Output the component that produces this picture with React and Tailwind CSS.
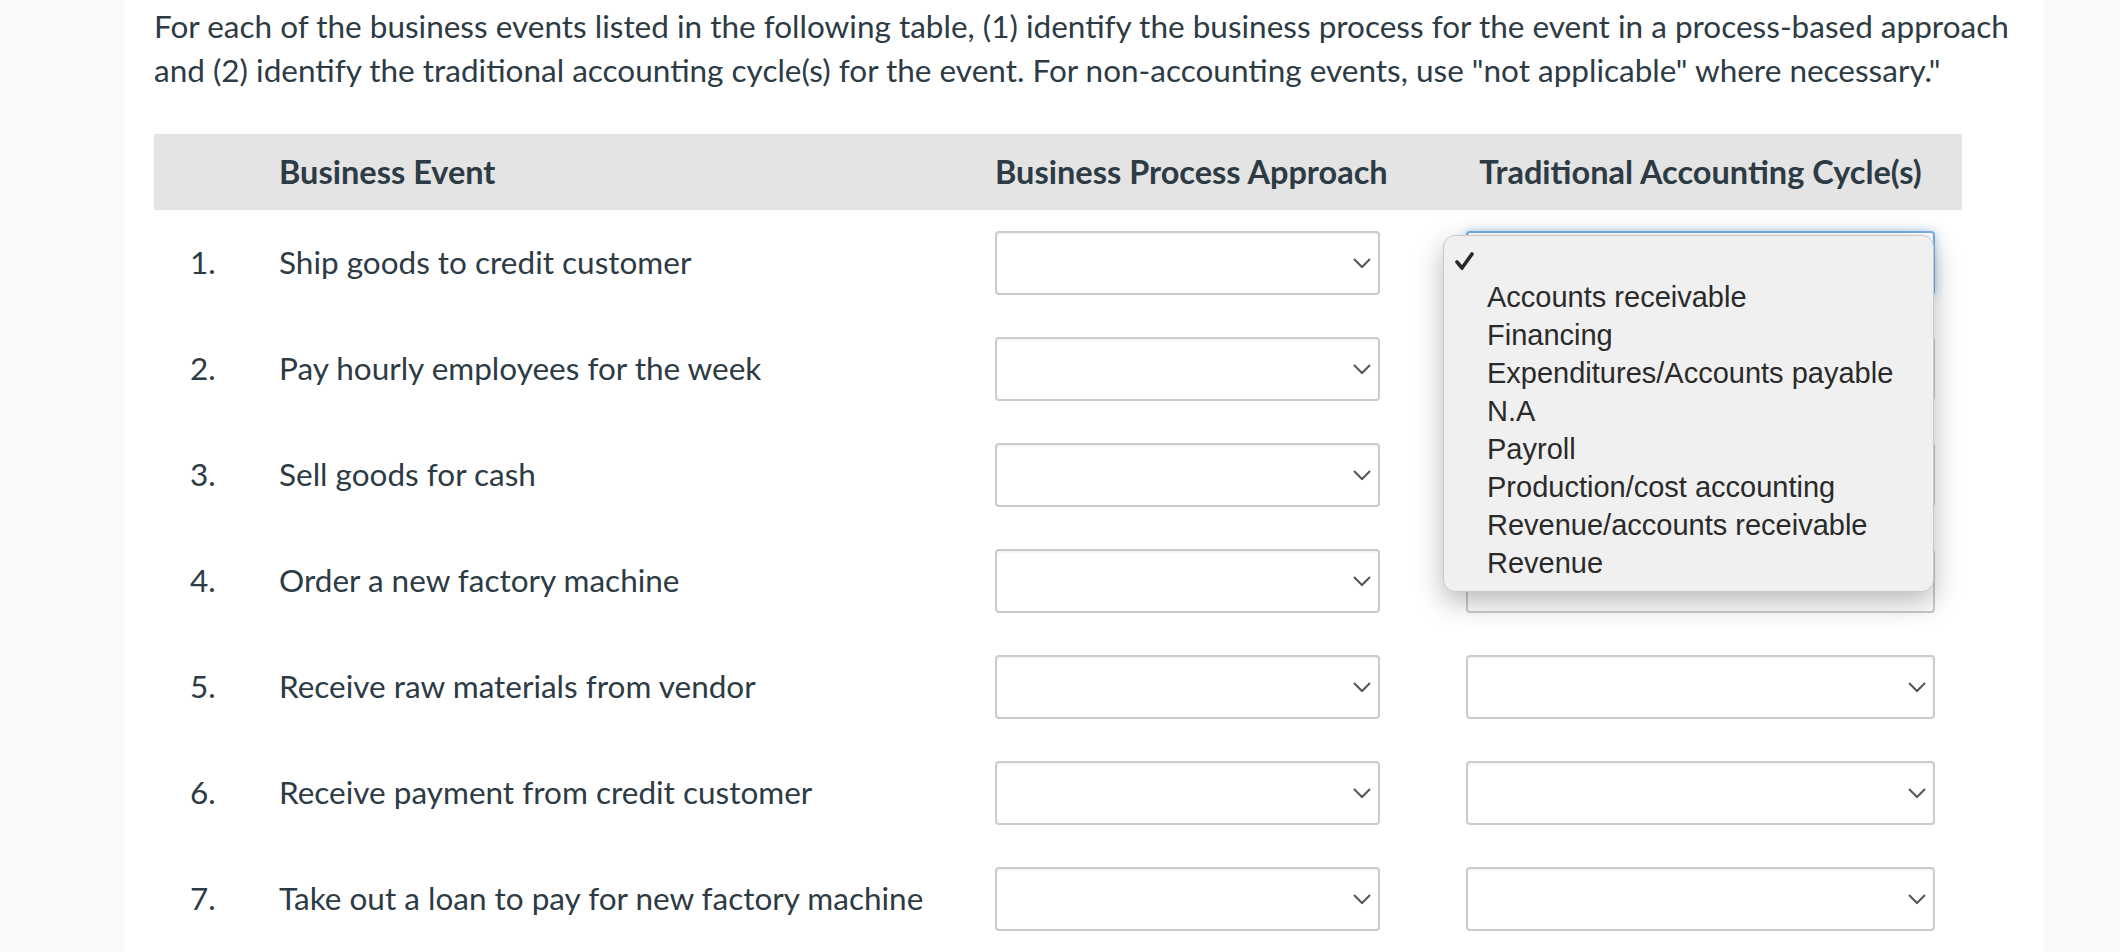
const events = [
  "Ship goods to credit customer",
  "Pay hourly employees for the week",
  "Sell goods for cash",
  "Order a new factory machine",
  "Receive raw materials from vendor",
  "Receive payment from credit customer",
  "Take out a loan to pay for new factory machine",
];

const options = [
  "Accounts receivable",
  "Financing",
  "Expenditures/Accounts payable",
  "N.A",
  "Payroll",
  "Production/cost accounting",
  "Revenue/accounts receivable",
  "Revenue",
];

const Chevron = () => (
  <svg width="18" height="11" viewBox="0 0 18 11" fill="none" className="absolute right-[7px] top-1/2 -translate-y-1/2">
    <path d="M1 1.5 L9 9.5 L17 1.5" stroke="#555" strokeWidth="2" />
  </svg>
);

const Check = () => (
  <svg width="19" height="18" viewBox="0 0 19 18" fill="none">
    <path d="M2 10 L7 16 L17 2" stroke="#2a2a2a" strokeWidth="3.6" strokeLinecap="round" strokeLinejoin="round" />
  </svg>
);

const Select = ({ focused }) => (
  <div
    className={
      "relative h-[64px] rounded-[4px] bg-white border-2 " +
      (focused
        ? "border-[#78aee3] shadow-[0_0_10px_rgba(102,170,230,0.55)]"
        : "border-[#cbcbcb] shadow-[inset_0_2px_2px_rgba(0,0,0,0.04)]")
    }
  >
    <Chevron />
  </div>
);

const Dropdown = () => (
  <div className="absolute left-[-23px] top-[4px] z-10 w-[491px] h-[357px] rounded-[12px] bg-[#f0f0f0] border border-[#c9c9c9] shadow-[0_10px_28px_rgba(0,0,0,0.28)] font-['Liberation_Sans',Arial,sans-serif] text-[29px] text-[#2a2a2a]">
    <div className="pl-[11px] pt-[16px] h-[42px]">
      <Check />
    </div>
    <ul className="pl-[43px]">
      {options.map((o) => (
        <li key={o} className="leading-[38px] h-[38px]">{o}</li>
      ))}
    </ul>
  </div>
);

export default function App() {
  return (
    <div className="min-h-screen bg-[#fafafa] font-['Lato','Open_Sans',sans-serif] text-[#2d3b45]">
      <div className="ml-[124px] w-[1920px] min-h-screen bg-white pl-[30px] pr-[30px] pt-[4px]">
        <p className="text-[31.5px] leading-[44px]">
          For each of the business events listed in the following table, (1) identify the business process for the event in a process-based approach
          <br />
          and (2) identify the traditional accounting cycle(s) for the event. For non-accounting events, use "not applicable" where necessary."
        </p>

        <div className="mt-[42px] w-[1808px]">
          <div className="flex h-[76px] items-center bg-[#e4e4e4] text-[32.5px] font-bold">
            <div className="w-[125px]" />
            <div className="w-[716px]">Business Event</div>
            <div className="w-[385px] text-center whitespace-nowrap">Business Process Approach</div>
            <div className="ml-[86px] w-[469px] text-center whitespace-nowrap">Traditional Accounting Cycle(s)</div>
          </div>

          <div className="pt-[21px]">
            {events.map((e, i) => (
              <div key={e} className="flex h-[106px] items-start text-[31.5px]">
                <div className="w-[125px] pl-[36px] h-[64px] flex items-center">{i + 1}.</div>
                <div className="w-[716px] h-[64px] flex items-center">{e}</div>
                <div className="w-[385px]">
                  <Select />
                </div>
                <div className="relative ml-[86px] w-[469px]">
                  <Select focused={i === 0} />
                  {i === 0 && <Dropdown />}
                </div>
              </div>
            ))}
          </div>
        </div>
      </div>
    </div>
  );
}
